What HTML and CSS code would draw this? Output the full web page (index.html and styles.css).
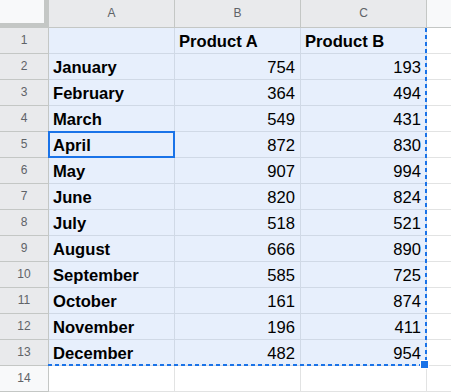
FILE: index.html
```html
<!DOCTYPE html>
<html>
<head>
<meta charset="utf-8">
<link rel="stylesheet" href="styles.css">
</head>
<body>
<div class="sheet">
  <div class="grid">
    <div class="corner"></div>
    <div class="colhead sel">A</div>
    <div class="colhead sel">B</div>
    <div class="colhead sel">C</div>
    <div class="colhead"></div>

    <div class="rowhead sel">1</div>
    <div class="cell in txt"></div><div class="cell in txt">Product A</div><div class="cell in txt">Product B</div><div class="cell"></div>

    <div class="rowhead sel">2</div>
    <div class="cell in txt">January</div><div class="cell in num">754</div><div class="cell in num">193</div><div class="cell"></div>

    <div class="rowhead sel">3</div>
    <div class="cell in txt">February</div><div class="cell in num">364</div><div class="cell in num">494</div><div class="cell"></div>

    <div class="rowhead sel">4</div>
    <div class="cell in txt">March</div><div class="cell in num">549</div><div class="cell in num">431</div><div class="cell"></div>

    <div class="rowhead sel">5</div>
    <div class="cell in txt">April</div><div class="cell in num">872</div><div class="cell in num">830</div><div class="cell"></div>

    <div class="rowhead sel">6</div>
    <div class="cell in txt">May</div><div class="cell in num">907</div><div class="cell in num">994</div><div class="cell"></div>

    <div class="rowhead sel">7</div>
    <div class="cell in txt">June</div><div class="cell in num">820</div><div class="cell in num">824</div><div class="cell"></div>

    <div class="rowhead sel">8</div>
    <div class="cell in txt">July</div><div class="cell in num">518</div><div class="cell in num">521</div><div class="cell"></div>

    <div class="rowhead sel">9</div>
    <div class="cell in txt">August</div><div class="cell in num">666</div><div class="cell in num">890</div><div class="cell"></div>

    <div class="rowhead sel">10</div>
    <div class="cell in txt">September</div><div class="cell in num">585</div><div class="cell in num">725</div><div class="cell"></div>

    <div class="rowhead sel">11</div>
    <div class="cell in txt">October</div><div class="cell in num">161</div><div class="cell in num">874</div><div class="cell"></div>

    <div class="rowhead sel">12</div>
    <div class="cell in txt">November</div><div class="cell in num">196</div><div class="cell in num">411</div><div class="cell"></div>

    <div class="rowhead sel">13</div>
    <div class="cell in txt">December</div><div class="cell in num">482</div><div class="cell in num">954</div><div class="cell"></div>

    <div class="rowhead">14</div>
    <div class="cell"></div><div class="cell"></div><div class="cell"></div><div class="cell"></div>
  </div>
  <div class="marquee"></div>
  <div class="handle"></div>
  <div class="active"></div>
</div>
</body>
</html>
```

FILE: styles.css
```css
html, body {
  margin: 0;
  padding: 0;
  background: #ffffff;
  overflow: hidden;
}

.sheet {
  position: relative;
  width: 451px;
  height: 392px;
  overflow: hidden;
}

.grid {
  display: grid;
  grid-template-columns: 49px 126px 126px 126px 40px;
  grid-template-rows: 28px repeat(14, 26px);
  font-family: "Liberation Sans", Arial, sans-serif;
}

.grid > div {
  box-sizing: border-box;
  border-right: 1px solid #e2e3e3;
  border-bottom: 1px solid #e2e3e3;
  white-space: nowrap;
  overflow: hidden;
}

.corner {
  background: #f8f9fa;
  border-right: 5px solid #c4c7c5 !important;
  border-bottom: 5px solid #c4c7c5 !important;
}

.colhead {
  background: #f8f9fa;
  border-right-color: #c4c7c5 !important;
  border-bottom-color: #c4c7c5 !important;
  color: #5f6368;
  font-size: 12px;
  text-align: center;
  line-height: 27px;
}

.rowhead {
  background: #f8f9fa;
  border-right-color: #c4c7c5 !important;
  border-bottom-color: #c4c7c5 !important;
  color: #5f6368;
  font-size: 12px;
  text-align: center;
  line-height: 25px;
}

.colhead.sel,
.rowhead.sel {
  background: #e9eaec;
}

.cell {
  font-size: 16.6px;
  line-height: 27px;
  padding: 0 4px;
  color: #000000;
}

.cell.in {
  background: #e7effc;
  border-right-color: #d0d9e6;
  border-bottom-color: #d0d9e6;
}

.txt {
  font-weight: bold;
  text-align: left;
}

.num {
  text-align: right;
  padding-right: 5px;
}

.marquee {
  position: absolute;
  left: 48px;
  top: 28px;
  width: 379px;
  height: 338px;
  pointer-events: none;
  background:
    repeating-linear-gradient(to bottom, #1a73e8 0 4px, transparent 4px 7px) right top / 2px 100% no-repeat,
    repeating-linear-gradient(to right, #1a73e8 0 4px, transparent 4px 7px) left bottom / 100% 2px no-repeat;
}

.handle {
  position: absolute;
  left: 421px;
  top: 361px;
  width: 7px;
  height: 7px;
  background: #1a73e8;
  box-shadow: 0 0 0 1px #ffffff;
}

.active {
  position: absolute;
  left: 48px;
  top: 131px;
  width: 123px;
  height: 23px;
  border: 2px solid #1a73e8;
}
```
